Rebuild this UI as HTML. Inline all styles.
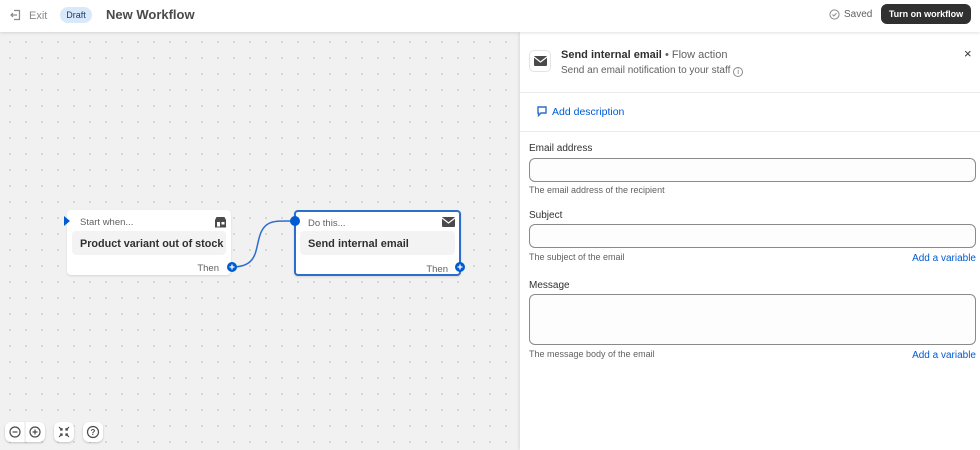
<!DOCTYPE html>
<html><head><style>
*{box-sizing:border-box;margin:0;padding:0}
body{width:980px;height:450px;overflow:hidden;font-family:"Liberation Sans",sans-serif;background:#f1f1f1;position:relative;color:#303030}
.top{position:absolute;left:0;top:0;width:980px;height:32px;background:#fff;box-shadow:0 1px 3px rgba(0,0,0,.12);z-index:5}
.canvas{position:absolute;left:0;top:32px;width:520px;height:418px;background-color:#f1f1f1;background-image:radial-gradient(circle,#d4d4d4 1px,transparent 1.2px);background-size:16px 16px;background-position:2px 2px}
.abs{position:absolute;white-space:nowrap}
.card{position:absolute;background:#fff;border-radius:4px;box-shadow:0 1px 2px rgba(0,0,0,.12)}
.inner{position:absolute;left:5px;right:5px;top:21px;height:24px;background:#f3f3f3;border-radius:4px;font-size:11px;font-weight:bold;padding:7px 0 0 8px;color:#303030;white-space:nowrap;overflow:hidden}
.small{font-size:9.5px;color:#616161}
.panel{position:absolute;left:520px;top:32px;width:460px;height:418px;background:#fff;box-shadow:-1px 0 3px rgba(0,0,0,.1)}
.inp{position:absolute;left:9px;width:447px;border:1px solid #8a8a8a;border-radius:6px;background:#fdfdfd}
.lbl{position:absolute;left:9px;font-size:10px;color:#303030}
.help{position:absolute;left:9px;font-size:9px;color:#616161}
.link{position:absolute;right:4px;font-size:10px;color:#005bd3}
.btn{position:absolute;background:#fff;border-radius:6px;box-shadow:0 1px 2px rgba(0,0,0,.2);height:20px}
</style></head><body>
<div class="top">
 <svg class="abs" style="left:10px;top:9px" width="12" height="12" viewBox="0 0 12 12" fill="none" stroke="#8a8a8a" stroke-width="1.2"><path d="M4 1.5h5.5v9H4M1 6h6M3 4l-2 2 2 2"/></svg>
 <div class="abs" style="left:29px;top:10px;font-size:11px;color:#8a8a8a">Exit</div>
 <div class="abs" style="left:60px;top:7px;width:32px;height:16px;border-radius:8px;background:#d8e9fb;font-size:9px;color:#1f3a63;text-align:center;line-height:16px">Draft</div>
 <div class="abs" style="left:106px;top:7px;font-size:13px;font-weight:bold;color:#4a4a4a">New Workflow</div>
 <svg class="abs" style="left:829px;top:9px" width="11" height="11" viewBox="0 0 12 12" fill="none" stroke="#8a8a8a" stroke-width="1.1"><circle cx="6" cy="6" r="5"/><path d="M3.8 6l1.6 1.6 2.8-3"/></svg>
 <div class="abs" style="left:844px;top:9px;font-size:10px;color:#616161">Saved</div>
 <div class="abs" style="left:881px;top:4px;width:90px;height:20px;border-radius:6px;background:#303030;color:#fff;font-size:9px;font-weight:bold;text-align:center;line-height:20px">Turn on workflow</div>
</div>
<div class="canvas"></div>
<div class="card" style="left:67px;top:210px;width:164px;height:65px">
 <div class="abs small" style="left:13px;top:7px">Start when...</div>
 <svg class="abs" style="left:147px;top:6px" width="13" height="12" viewBox="0 0 13 12" fill="#4a4a4a"><path d="M1 4L2.5 1h8L12 4v7.5H1z M3 6v4.5h3V6z M7.5 6v2.5h3V6z" fill-rule="evenodd"/></svg>
 <div class="inner" style="font-size:10.8px">Product variant out of stock</div>
 <div class="abs small" style="right:12px;top:53px">Then</div>
</div>
<svg class="abs" style="left:62px;top:215px" width="10" height="12"><path d="M2 1l6 5-6 5z" fill="#005bd3"/></svg>
<div class="card" style="left:294px;top:210px;width:167px;height:66px;border:2px solid #2c6ecb">
 <div class="abs small" style="left:12px;top:6px">Do this...</div>
 <svg class="abs" style="left:146px;top:5px" width="13" height="10" viewBox="0 0 13 10"><rect width="13" height="10" rx="1" fill="#4a4a4a"/><path d="M0 1l6.5 5L13 1" stroke="#fff" stroke-width="1.2" fill="none"/></svg>
 <div class="inner" style="left:4px;right:4px;top:19px">Send internal email</div>
 <div class="abs small" style="right:11px;top:52px">Then</div>
</div>
<svg class="abs" style="left:220px;top:210px" width="250" height="70">
 <path d="M12 57C38 57 35 40 40 25S55 11 72 11" stroke="#2c6ecb" stroke-width="1.5" fill="none"/>
 <circle cx="75" cy="11" r="5" fill="#005bd3"/>
 <circle cx="12" cy="57" r="5" fill="#005bd3"/><path d="M9.5 57h5M12 54.5v5" stroke="#fff" stroke-width="1.3"/>
 <circle cx="240" cy="57" r="5" fill="#005bd3"/><path d="M237.5 57h5M240 54.5v5" stroke="#fff" stroke-width="1.3"/>
</svg>
<div class="btn" style="left:5px;top:422px;width:40px"><svg width="40" height="20"><circle cx="10" cy="10" r="5" stroke="#4a4a4a" fill="none" stroke-width="1.2"/><path d="M7.5 10h5" stroke="#4a4a4a" stroke-width="1.2"/><line x1="20" y1="0" x2="20" y2="20" stroke="#e3e3e3"/><circle cx="30" cy="10" r="5" stroke="#4a4a4a" fill="none" stroke-width="1.2"/><path d="M27.5 10h5M30 7.5v5" stroke="#4a4a4a" stroke-width="1.2"/></svg></div>
<div class="btn" style="left:54px;top:422px;width:20px"><svg width="20" height="20" stroke="#4a4a4a" stroke-width="1.2" fill="none"><path d="M5 5l3 3M8 6v2H6M15 5l-3 3M12 6v2h2M5 15l3-3M6 12h2v2M15 15l-3-3M14 12h-2v2"/></svg></div>
<div class="btn" style="left:83px;top:422px;width:20px"><svg width="20" height="20"><circle cx="10" cy="10" r="5.5" stroke="#4a4a4a" fill="none" stroke-width="1.2"/><text x="10" y="13" font-size="8" font-weight="bold" text-anchor="middle" fill="#4a4a4a" font-family="Liberation Sans">?</text></svg></div>
<div class="panel">
 <div class="abs" style="left:9px;top:18px;width:22px;height:22px;border:1px solid #e3e3e3;border-radius:5px"><svg class="abs" style="left:4px;top:5px" width="13" height="10" viewBox="0 0 13 10"><rect width="13" height="10" rx="1" fill="#4a4a4a"/><path d="M0 1l6.5 5L13 1" stroke="#fff" stroke-width="1.2" fill="none"/></svg></div>
 <div class="abs" style="left:41px;top:17px;font-size:11px"><b>Send internal email</b> <span style="color:#616161">• Flow action</span></div>
 <div class="abs" style="left:41px;top:33px;font-size:10px;color:#616161">Send an email notification to your staff <span style="display:inline-block;width:10px;height:10px;border:1px solid #8a8a8a;border-radius:50%;font-size:7px;text-align:center;line-height:9px;vertical-align:-1px">i</span></div>
 <div class="abs" style="left:444px;top:14px;font-size:13px;color:#303030">×</div>
 <div class="abs" style="left:0;top:60px;width:460px;height:1px;background:#ebebeb"></div>
 <svg class="abs" style="left:16px;top:73px" width="12" height="12" viewBox="0 0 12 12" fill="none" stroke="#2c6ecb" stroke-width="1.4"><path d="M2 2h8v6H5L2.5 10.5V8H2z"/></svg>
 <div class="abs" style="left:32px;top:74px;font-size:10.5px;color:#005bd3">Add description</div>
 <div class="abs" style="left:0;top:99px;width:460px;height:1px;background:#ebebeb"></div>
 <div class="lbl" style="top:111px">Email address</div>
 <div class="inp" style="top:126px;height:24px"></div>
 <div class="help" style="top:153px">The email address of the recipient</div>
 <div class="lbl" style="top:178px">Subject</div>
 <div class="inp" style="top:192px;height:24px"></div>
 <div class="help" style="top:220px">The subject of the email</div>
 <div class="link" style="top:221px">Add a variable</div>
 <div class="lbl" style="top:248px">Message</div>
 <div class="inp" style="top:262px;height:51px"></div>
 <div class="help" style="top:317px">The message body of the email</div>
 <div class="link" style="top:318px">Add a variable</div>
</div>
</body></html>
